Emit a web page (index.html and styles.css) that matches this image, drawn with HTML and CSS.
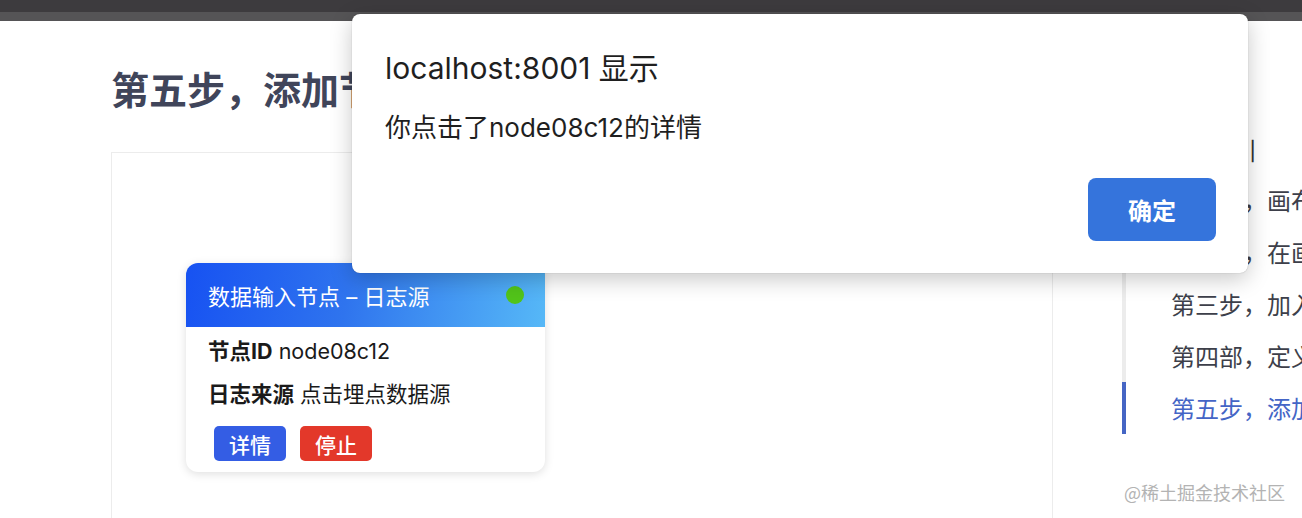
FILE: index.html
```html
<!DOCTYPE html>
<html lang="zh-CN">
<head>
<meta charset="utf-8">
<title>第五步，添加节点点击事件</title>
<link rel="stylesheet" href="styles.css">
</head>
<body>
<div class="chrome">
  <div class="tabbar"></div>
  <div class="toolbar"></div>
</div>
<div class="page">
  <main class="article">
    <h2 class="heading">第五步，添加节点点击事件</h2>
    <div class="canvas">
      <div class="node">
        <div class="node-head">
          <span class="node-title">数据输入节点 – 日志源</span>
          <span class="status-dot"></span>
        </div>
        <div class="node-body">
          <div class="node-row"><b>节点ID</b> node08c12</div>
          <div class="node-row"><b>日志来源</b> 点击埋点数据源</div>
          <div class="node-actions">
            <button class="btn btn-blue">详情</button>
            <button class="btn btn-red">停止</button>
          </div>
        </div>
      </div>
    </div>
  </main>
  <aside class="toc">
    <div class="toc-title">文章索引</div>
    <ul class="toc-list">
      <li>第一步，画布初始化</li>
      <li>第二步，在画布中添加节点</li>
      <li>第三步，加入自定义节点</li>
      <li>第四部，定义节点样式</li>
      <li class="active">第五步，添加节点点击事件</li>
    </ul>
  </aside>
</div>
<div class="alert">
  <div class="alert-title">localhost:8001 显示</div>
  <div class="alert-msg">你点击了node08c12的详情</div>
  <div class="alert-actions">
    <button class="alert-ok">确定</button>
  </div>
</div>
<div class="watermark">@稀土掘金技术社区</div>
</body>
</html>
```
FILE: styles.css
```css
* { box-sizing: border-box; }
html, body {
  margin: 0;
  padding: 0;
  width: 1302px;
  height: 518px;
  overflow: hidden;
  background: #fff;
  font-family: "Inter", "Noto Sans CJK SC", sans-serif;
}
.chrome .tabbar { height: 12px; background: #3d3b3e; }
.chrome .toolbar { height: 9px; background: #555456; }

.page {
  display: flex;
  padding-left: 111px;
  overflow: hidden;
}
.article { width: 942px; flex: none; }
.heading {
  margin: 42px 0 40px;
  font-size: 38px;
  line-height: 49px;
  font-weight: 700;
  color: #40455a;
  white-space: nowrap;
  font-family: "Noto Sans CJK SC", sans-serif;
}
.canvas {
  position: relative;
  height: 420px;
  border: 1px solid #ececec;
}
.node {
  position: absolute;
  left: 74px;
  top: 110px;
  width: 359px;
  background: #fff;
  border-radius: 12px;
  box-shadow: 0 2px 10px rgba(0,0,0,0.13);
  overflow: hidden;
}
.node-head {
  height: 64px;
  display: flex;
  align-items: center;
  justify-content: space-between;
  padding: 0 21px 0 22px;
  background: linear-gradient(100deg, #1752f2 0%, #2f74ee 45%, #56b8f7 100%);
  color: #fff;
  font-size: 22px;
}
.status-dot {
  width: 18px;
  height: 18px;
  border-radius: 50%;
  background: #52c41a;
}
.node-body { padding: 3px 22px 11px; color: #1a1a1a; }
.node-row {
  font-size: 21.5px;
  line-height: 43px;
  white-space: nowrap;
}
.node-row b { font-weight: 700; }
.node-actions {
  display: flex;
  gap: 14px;
  margin-top: 10px;
  padding-left: 6px;
}
.btn {
  width: 72px;
  height: 35px;
  border: none;
  border-radius: 5px;
  color: #fff;
  font-size: 21px;
  font-weight: 500;
  font-family: "Noto Sans CJK SC", sans-serif;
  padding: 0;
}
.btn-blue { background: #345de4; }
.btn-red { background: #e3382a; }

.toc {
  margin-left: 69px;
  padding-top: 111px;
  white-space: nowrap;
  font-family: "Noto Sans CJK SC", sans-serif;
  min-width: 0;
  flex: 1;
  overflow: hidden;
}
.toc-title {
  font-size: 24px;
  line-height: 36px;
  color: #333;
  padding-left: 39px;
  margin-bottom: 6px;
}
.toc-list {
  list-style: none;
  margin: 0;
  padding: 0;
  border-left: 4px solid #ececec;
}
.toc-list li {
  font-size: 24px;
  line-height: 52px;
  padding-left: 45px;
  color: #3d3f4a;
  margin-left: -4px;
  border-left: 4px solid transparent;
  overflow: hidden;
}
.toc-list li.active {
  color: #4465c6;
  border-left-color: #4565c4;
}

.alert {
  position: absolute;
  left: 352px;
  top: 14px;
  width: 896px;
  height: 259px;
  background: #fff;
  border-radius: 8px;
  box-shadow: 0 6px 22px rgba(0,0,0,0.22), 0 0 1px rgba(0,0,0,0.35);
  padding: 0 32px 32px 33px;
  display: flex;
  flex-direction: column;
  color: #1f1f1f;
}
.alert-title {
  font-size: 30px;
  line-height: 40px;
  margin-top: 34px;
}
.alert-msg {
  font-size: 26px;
  line-height: 36px;
  margin-top: 22px;
}
.alert-actions {
  margin-top: auto;
  display: flex;
  justify-content: flex-end;
}
.alert-ok {
  width: 128px;
  height: 63px;
  border: none;
  border-radius: 8px;
  background: #3574dc;
  color: #fff;
  font-size: 24px;
  font-weight: 700;
  font-family: "Noto Sans CJK SC", sans-serif;
}
.watermark {
  position: absolute;
  left: 1124px;
  top: 479px;
  font-size: 18px;
  line-height: 26px;
  color: #b3b3b3;
  font-family: "Noto Sans CJK SC", sans-serif;
  white-space: nowrap;
}
```
